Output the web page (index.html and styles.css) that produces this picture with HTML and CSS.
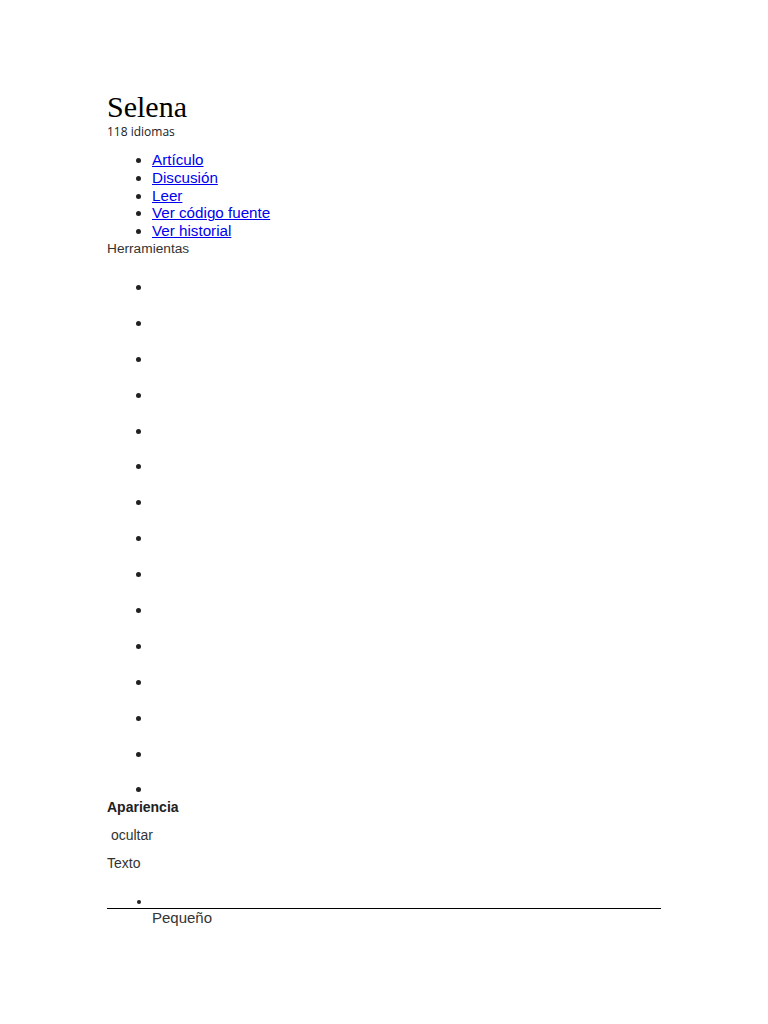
FILE: index.html
```html
<!DOCTYPE html>
<html lang="es">
<head>
<meta charset="utf-8">
<title>Selena</title>
<link rel="stylesheet" href="styles.css">
</head>
<body>
<div class="page">
  <h1 class="title">Selena</h1>
  <div class="langs">118 idiomas</div>
  <ul class="views">
    <li><a href="#">Artículo</a></li>
    <li><a href="#">Discusión</a></li>
    <li><a href="#">Leer</a></li>
    <li><a href="#">Ver código fuente</a></li>
    <li><a href="#">Ver historial</a></li>
  </ul>
  <div class="tools">Herramientas</div>
  <ul class="empty-list">
    <li></li><li></li><li></li><li></li><li></li>
    <li></li><li></li><li></li><li></li><li></li>
    <li></li><li></li><li></li><li></li><li></li>
  </ul>
  <div class="app-title">Apariencia</div>
  <div class="hide">&nbsp;ocultar</div>
  <div class="label">Texto</div>
  <ul class="size-list">
    <li>
      <span class="blank">&nbsp;</span>
      <div class="rule"></div>
      <div class="option">Pequeño</div>
    </li>
  </ul>
</div>
</body>
</html>
```
FILE: styles.css
```css
body {
  margin: 0;
  background: #fff;
  color: #202122;
  font-family: "Liberation Sans", Arial, sans-serif;
}
.page {
  width: 554px;
  padding: 90px 0 0 107px;
}
.title {
  margin: 0;
  font-family: "Liberation Serif", "Times New Roman", serif;
  font-weight: normal;
  font-size: 30px;
  line-height: 34px;
  color: #000;
}
.langs {
  font-family: "Open Sans", sans-serif;
  font-size: 12px;
  line-height: 16px;
  color: #202122;
}
.views {
  margin: 11px 0 0;
  padding-left: 45px;
  font-size: 15.2px;
  line-height: 17.8px;
}
.views a {
  color: #0000ee;
}
.tools {
  font-size: 13.7px;
  line-height: 17px;
  color: #333;
}
.empty-list {
  margin: 21px 0 0;
  padding-left: 45px;
  font-size: 15px;
}
.empty-list li {
  height: 35.9px;
}
.app-title {
  margin-top: -17px;
  font-size: 14px;
  font-weight: bold;
  line-height: 17px;
}
.hide {
  margin-top: 11px;
  font-size: 14px;
  line-height: 17px;
  color: #333;
}
.label {
  margin-top: 11px;
  font-size: 14px;
  line-height: 17px;
  color: #333;
}
.size-list {
  margin: 21px 0 0;
  padding-left: 45px;
  font-size: 14px;
}
.blank {
  display: block;
  line-height: 14px;
}
.rule {
  margin-left: -45px;
  border-top: 1px solid #000;
}
.option {
  margin-top: 0;
  font-size: 15px;
  line-height: 18px;
  color: #333;
}
```
